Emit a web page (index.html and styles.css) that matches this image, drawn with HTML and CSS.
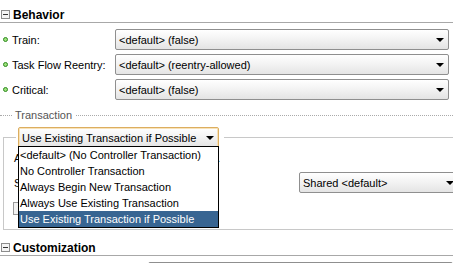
FILE: index.html
```html
<!DOCTYPE html>
<html lang="en">
<head>
  <meta charset="UTF-8" />
  <title>Task Flow Properties - Behavior</title>
  <link rel="stylesheet" href="styles.css">
</head>
<body>
  <div class="section-head">
    <span class="toggle"></span>
    <span class="section-title">Behavior</span>
  </div>

  <div class="props">
    <div class="prop-label"><span class="dot"></span>Train:</div>
    <div class="select"><span>&lt;default&gt; (false)</span><span class="arrow"></span></div>

    <div class="prop-label"><span class="dot"></span>Task Flow Reentry:</div>
    <div class="select"><span>&lt;default&gt; (reentry-allowed)</span><span class="arrow"></span></div>

    <div class="prop-label"><span class="dot"></span>Critical:</div>
    <div class="select"><span>&lt;default&gt; (false)</span><span class="arrow"></span></div>
  </div>

  <div class="group-title">
    <span class="dots short"></span>
    <span class="group-name">Transaction</span>
    <span class="dots"></span>
  </div>

  <fieldset class="txn">
    <legend>
      <div class="txn-picker">
        <div class="select focused"><span>Use Existing Transaction if Possible</span><span class="arrow"></span></div>
        <ul class="popup">
          <li>&lt;default&gt; (No Controller Transaction)</li>
          <li>No Controller Transaction</li>
          <li>Always Begin New Transaction</li>
          <li>Always Use Existing Transaction</li>
          <li class="selected">Use Existing Transaction if Possible</li>
        </ul>
      </div>
    </legend>
    <div class="txn-note"><span>A</span><span class="stop">.</span></div>
    <div class="txn-row">
      <span>S</span>
      <div class="select small"><span>Shared &lt;default&gt;</span><span class="arrow"></span></div>
    </div>
    <div class="txn-check"><span class="box"></span></div>
  </fieldset>

  <div class="section-head custom">
    <span class="toggle"></span>
    <span class="section-title">Customization</span>
  </div>
  <div class="custom-row">
    <div class="select wide"><span></span><span class="arrow"></span></div>
  </div>
</body>
</html>
```

FILE: styles.css
```css
body {
  margin: 0;
  width: 453px;
  height: 263px;
  overflow: hidden;
  background: #fff;
  font-family: "Liberation Sans", Arial, sans-serif;
  font-size: 11px;
  color: #000;
}
.section-head {
  display: flex;
  align-items: center;
  gap: 3px;
  height: 15px;
  margin-top: 7px;
  padding-left: 1px;
  border-bottom: 1px solid #a8a8a8;
}
.toggle {
  position: relative;
  width: 7px;
  height: 7px;
  border: 1px solid #8c8c8c;
  background: #f4f4f4;
}
.toggle::after {
  content: "";
  position: absolute;
  left: 1px;
  top: 3px;
  width: 5px;
  height: 1px;
  background: #333;
}
.section-title {
  font-weight: bold;
  font-size: 12px;
}
.props {
  display: grid;
  grid-template-columns: 115px 334px;
  row-gap: 4px;
  padding-top: 6px;
}
.prop-label {
  display: flex;
  align-items: center;
  gap: 4px;
  padding-left: 3px;
}
.dot {
  width: 3px;
  height: 3px;
  border: 1px solid #2f8a1f;
  border-radius: 50%;
  background: #9be07a;
}
.select {
  display: flex;
  align-items: center;
  justify-content: space-between;
  box-sizing: border-box;
  height: 21px;
  padding: 0 4px 0 3px;
  border: 1px solid #8f8f8f;
  border-radius: 2px;
  background: linear-gradient(#ffffff, #f1f1f1 55%, #e4e4e4);
  white-space: nowrap;
}
.arrow {
  width: 0;
  height: 0;
  border-left: 4px solid transparent;
  border-right: 4px solid transparent;
  border-top: 4px solid #000;
}
.group-title {
  display: flex;
  align-items: center;
  margin-top: 8px;
  height: 14px;
}
.dots {
  flex: 1;
  border-top: 1px dotted #aaa;
}
.dots.short {
  flex: none;
  width: 12px;
}
.group-name {
  padding: 0 4px 0 3px;
  color: #555;
}
.txn {
  margin: 5px 0 0 3px;
  padding: 2px 0 14px 12px;
  border: 1px solid #c8c8c8;
  border-right: none;
  min-width: 0;
}
.txn legend {
  padding: 0 5px 0 2px;
}
.txn-picker {
  position: relative;
}
.select.focused {
  width: 201px;
  border-color: #dcae60;
  box-shadow: inset 0 0 0 1px #f8e2b8;
}
.popup {
  position: absolute;
  top: 19px;
  left: 0;
  z-index: 2;
  width: 201px;
  box-sizing: border-box;
  margin: 0;
  padding: 0;
  list-style: none;
  border: 1px solid #000;
  background: #fff;
}
.popup li {
  height: 16px;
  line-height: 16px;
  padding-left: 1px;
  white-space: nowrap;
}
.popup li.selected {
  background: #386592;
  color: #fff;
}
.txn-note {
  display: flex;
  height: 16px;
  line-height: 16px;
  margin-left: -2px;
}
.txn-note .stop {
  margin-left: 196px;
  color: #3a7fa0;
}
.txn-row {
  display: flex;
  align-items: center;
  justify-content: space-between;
  margin: 6px -6px 0 -2px;
}
.select.small {
  width: 160px;
}
.txn-check {
  display: flex;
  align-items: center;
  margin-top: 9px;
  margin-left: -3px;
}
.box {
  width: 11px;
  height: 11px;
  border: 1px solid #9a9a9a;
  background: #f2f2f2;
}
.section-head.custom {
  margin-top: 10px;
}
.custom-row {
  display: flex;
  justify-content: flex-end;
  height: 2px;
  margin-top: 6px;
  overflow: hidden;
}
.select.wide {
  width: 305px;
  flex: none;
}
```
